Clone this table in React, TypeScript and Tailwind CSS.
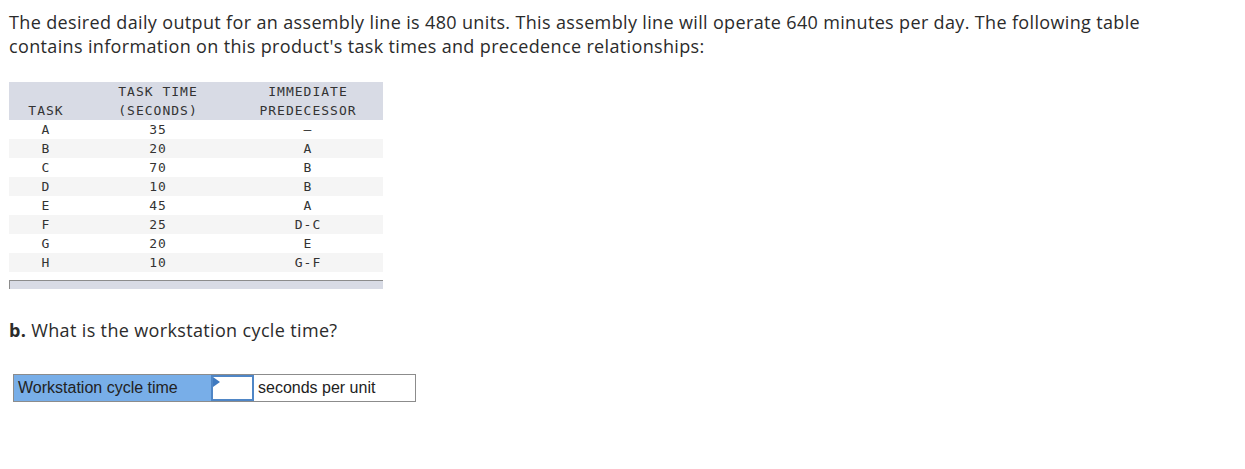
const ROWS = [
  { task: 'A', time: '35', pred: '—' },
  { task: 'B', time: '20', pred: 'A' },
  { task: 'C', time: '70', pred: 'B' },
  { task: 'D', time: '10', pred: 'B' },
  { task: 'E', time: '45', pred: 'A' },
  { task: 'F', time: '25', pred: 'D-C' },
  { task: 'G', time: '20', pred: 'E' },
  { task: 'H', time: '10', pred: 'G-F' },
]

function TaskTable() {
  return (
    <div className="w-[374px] font-['DejaVu_Sans_Mono',monospace] text-[13px] tracking-[1px] text-[#333]">
      <div className="grid grid-cols-[74px_150px_150px] bg-[#d8dbe5] leading-[19px]">
        <div className="flex items-end justify-center pt-[19px]">TASK</div>
        <div className="text-center">
          TASK TIME
          <br />
          (SECONDS)
        </div>
        <div className="text-center">
          IMMEDIATE
          <br />
          PREDECESSOR
        </div>
      </div>
      {ROWS.map((row, i) => (
        <div
          key={row.task}
          className={`grid h-[19px] grid-cols-[74px_150px_150px] items-center leading-[19px] ${
            i % 2 === 1 ? 'bg-[#f5f5f5]' : 'bg-white'
          }`}
        >
          <div className="text-center">{row.task}</div>
          <div className="text-center">{row.time}</div>
          <div className="text-center">{row.pred}</div>
        </div>
      ))}
      <div className="mt-[8px] h-[9px] border-t border-l border-[#8c8c8c] bg-[#d8dbe5]" />
    </div>
  )
}

export default function App() {
  return (
    <div className="min-h-screen bg-white px-[9px] pt-[10px] font-['Open_Sans',sans-serif] text-[18px] tracking-[0.35px] text-[#2b2b2b]">
      <p className="leading-[24px]">
        The desired daily output for an assembly line is 480 units. This assembly line will operate 640 minutes per day. The following table
        <br />
        contains information on this product's task times and precedence relationships:
      </p>

      <div className="mt-[24px] tracking-normal">
        <TaskTable />
      </div>

      <p className="mt-[29px] leading-[24px]">
        <span className="font-bold">b.</span> What is the workstation cycle time?
      </p>

      <div className="ml-[4px] mt-[32px] flex h-[28px] w-[403px] border border-[#8c8c8c] font-['Liberation_Sans',Arial,sans-serif] text-[16px] tracking-normal text-[#222]">
        <div className="flex w-[197px] items-center bg-[#78aee8] pl-[4px]">Workstation cycle time</div>
        <div className="relative w-[43px] border-2 border-[#4f86c6] bg-white">
          <span className="absolute left-0 top-0 h-0 w-0 border-t-[5px] border-b-[5px] border-l-[7px] border-t-transparent border-b-transparent border-l-[#3f7ac0]" />
        </div>
        <div className="flex flex-1 items-center pl-[4px]">seconds per unit</div>
      </div>
    </div>
  )
}
